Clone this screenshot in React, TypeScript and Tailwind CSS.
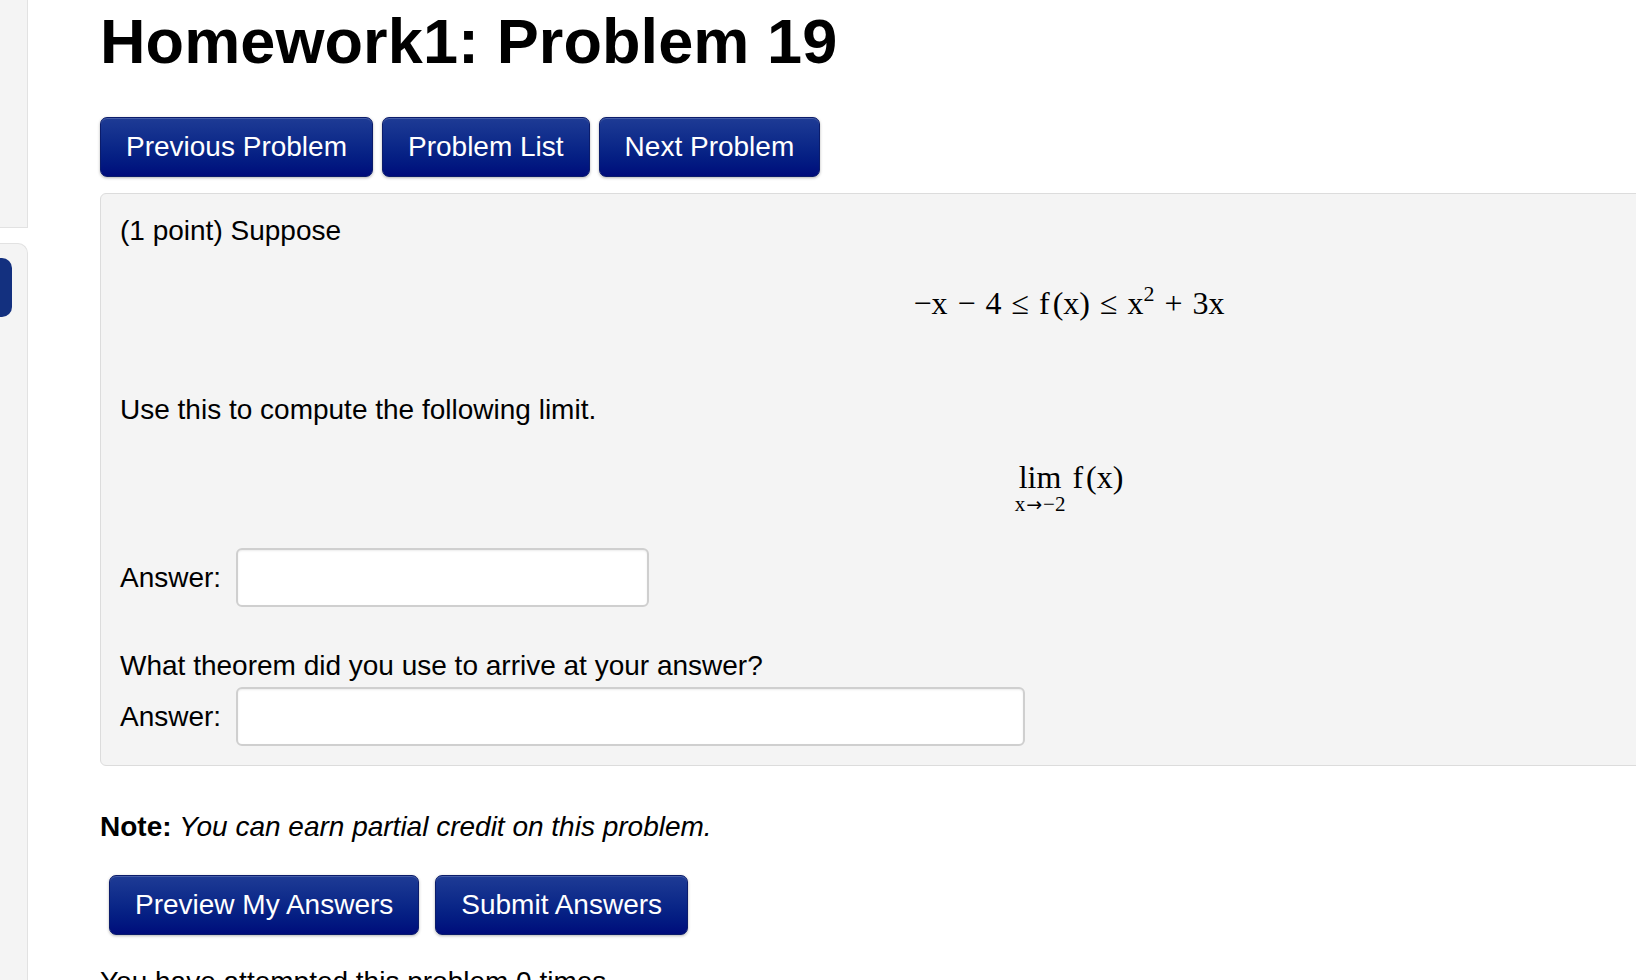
import React from 'react';

const navButton =
  'h-[60px] px-[25px] rounded-[7px] border border-[#0b1c6b] bg-gradient-to-b from-[#1e3b95] to-[#000b7b] text-white text-[28px] leading-none shadow-[0_1px_3px_rgba(0,0,0,0.3),inset_0_1px_0_rgba(255,255,255,0.18)] whitespace-nowrap';

function AnswerBox({ width }: { width: string }) {
  return (
    <input
      type="text"
      className={`${width} h-[59px] ml-[15px] rounded-[6px] border-2 border-[#cfcfcf] bg-white shadow-[inset_0_1px_2px_rgba(0,0,0,0.08)] outline-none`}
    />
  );
}

function Op({ children }: { children: React.ReactNode }) {
  return <span className="mx-[10px]">{children}</span>;
}

export default function App() {
  return (
    <div className="flex min-h-screen h-[980px] overflow-hidden bg-white text-black font-['Liberation_Sans',Arial,sans-serif]">
      {/* left rail */}
      <aside className="flex w-[28px] shrink-0 flex-col">
        <div className="h-[228px] border-r border-b border-[#e2e2e2] bg-[#f4f4f4]" />
        <div className="mt-[15px] flex-1 rounded-tr-[10px] border-t border-r border-[#e2e2e2] bg-[#f4f4f4] pt-[14px]">
          <div className="h-[59px] w-[12px] rounded-r-[10px] bg-[#13307f]" />
        </div>
      </aside>

      <main className="w-[1938px] shrink-0 pl-[72px]">
        <h1 className="mt-[10px] text-[63px] font-bold leading-none tracking-[0.1px]">
          Homework1: Problem 19
        </h1>

        <div className="mt-[44px] flex gap-[9px]">
          <button className={navButton}>Previous Problem</button>
          <button className={navButton}>Problem List</button>
          <button className={navButton}>Next Problem</button>
        </div>

        <div className="mt-[16px] w-[1938px] rounded-[6px] border border-[#dcdcdc] bg-[#f4f4f4] px-[19px] pt-[17px] pb-[19px] text-[28px] leading-[40px]">
          <p>(1 point) Suppose</p>

          <div className="mt-[32px] text-center font-['Liberation_Serif','Times_New_Roman',serif] text-[32px] leading-[40px]">
            <span>−x</span>
            <Op>−</Op>
            <span>4</span>
            <Op>≤</Op>
            <span className="mr-[3px]">f</span>
            <span>(x)</span>
            <Op>≤</Op>
            <span>x</span>
            <span className="text-[22px] leading-none align-[13px]">2</span>
            <Op>+</Op>
            <span>3x</span>
          </div>

          <p className="mt-[67px]">Use this to compute the following limit.</p>

          <div className="mt-[31px] flex justify-center font-['Liberation_Serif','Times_New_Roman',serif]">
            <div className="flex items-start">
              <div className="flex flex-col items-center">
                <span className="text-[32px] leading-[33px]">lim</span>
                <div className="flex h-[20px] items-baseline text-[21px] leading-[20px]">
                  <span>x</span>
                  <span className="mx-[1px] font-['DejaVu_Sans',sans-serif] text-[19px] leading-[20px]">→</span>
                  <span>−2</span>
                </div>
              </div>
              <span className="ml-[7px] text-[32px] leading-[33px]">
                <span className="mr-[3px]">f</span>(x)
              </span>
            </div>
          </div>

          <div className="mt-[34px] flex items-center">
            <span>Answer:</span>
            <AnswerBox width="w-[413px]" />
          </div>

          <p className="mt-[39px]">What theorem did you use to arrive at your answer?</p>

          <div className="mt-px flex items-center">
            <span>Answer:</span>
            <AnswerBox width="w-[789px]" />
          </div>
        </div>

        <p className="mt-[41px] text-[28px] leading-[40px]">
          <span className="font-bold">Note:</span>{' '}
          <i>You can earn partial credit on this problem.</i>
        </p>

        <div className="mt-[28px] ml-[9px] flex gap-[16px]">
          <button className={navButton}>Preview My Answers</button>
          <button className={navButton}>Submit Answers</button>
        </div>

        <p className="mt-[27px] text-[28px] leading-[40px]">
          You have attempted this problem 0 times.
        </p>
      </main>
    </div>
  );
}
